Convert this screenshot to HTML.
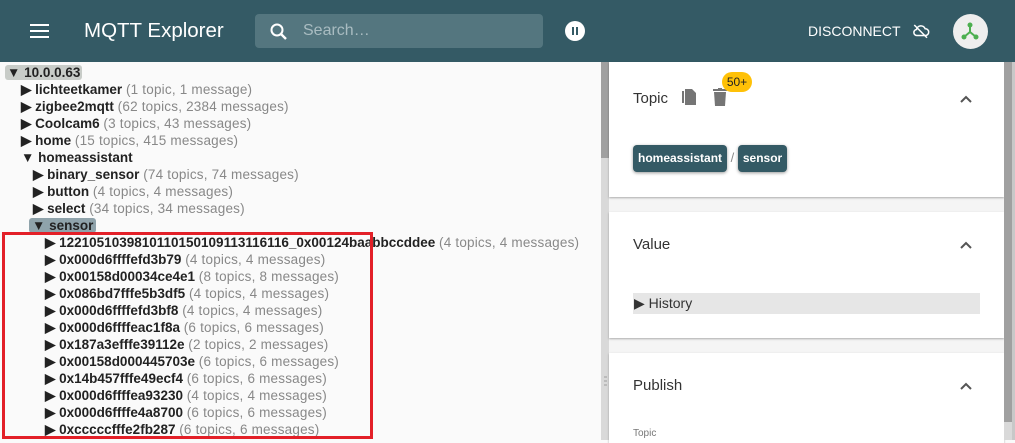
<!DOCTYPE html>
<html><head><meta charset="utf-8"><style>
*{margin:0;padding:0;box-sizing:border-box}
body{width:1015px;height:440px;overflow:hidden;background:#fafafa;font-family:"Liberation Sans",sans-serif;position:relative}
.hdr{position:absolute;left:0;top:0;width:1015px;height:62px;background:#345a65}
.title{position:absolute;left:84px;top:19px;color:#fff;font-size:20.5px}
.search{position:absolute;left:255px;top:14px;width:288px;height:34px;background:#54767f;border-radius:4px}
.search span{position:absolute;left:48px;top:8px;color:#a9bcc1;font-size:16px}
.tree{position:absolute;left:0;top:62px;width:601px;height:378px;background:#fafafa;font-size:13.5px;color:#222}
.r{position:absolute;height:17px;line-height:17px;white-space:nowrap}
.r b{font-weight:bold;color:#222}
.r i{font-style:normal;color:#888;letter-spacing:0.2px}
.chip{background:#c8ccc8;border-radius:3px;padding:0 2px}
.chip2{background:#8fa3ab;border-radius:3px;padding:0 3px}
.card{position:absolute;left:609px;width:395px;background:#fff;box-shadow:0 1px 2px rgba(0,0,0,.3)}
.h{position:absolute;left:24px;font-size:15px;color:#333}
.chev{position:absolute;left:350px;width:14px;height:14px}
.tag{display:inline-block;background:#345a65;color:#fff;font-weight:bold;font-size:12px;padding:0 5px;height:27px;line-height:27px;border-radius:4px;box-shadow:0 1px 3px rgba(0,0,0,.4)}
</style></head><body>
<div class="hdr">
<svg style="position:absolute;left:30px;top:24px" width="19" height="14"><rect y="0" width="19" height="2" fill="#fff"/><rect y="6" width="19" height="2" fill="#fff"/><rect y="12" width="19" height="2" fill="#fff"/></svg>
<div class="title">MQTT Explorer</div>
<div class="search"><svg style="position:absolute;left:14px;top:8px" width="20" height="20"><circle cx="8" cy="8" r="5.5" fill="none" stroke="#fff" stroke-width="2"/><line x1="12" y1="12" x2="17" y2="17" stroke="#fff" stroke-width="2.4"/></svg><span>Search…</span></div>
<svg style="position:absolute;left:565px;top:21px" width="20" height="20"><circle cx="10" cy="10" r="10" fill="#fff"/><rect x="7" y="6" width="2" height="8" fill="#345a65"/><rect x="11" y="6" width="2" height="8" fill="#345a65"/></svg>
<div style="position:absolute;left:808px;top:23px;color:#fff;font-size:14px">DISCONNECT</div>
<svg style="position:absolute;left:912px;top:22px" width="18" height="18" viewBox="0 0 24 24"><path d="M6 10a6 6 0 0 1 11.5-1A4.5 4.5 0 0 1 18 18H7a4 4 0 0 1-1-8z" fill="none" stroke="#fff" stroke-width="2"/><line x1="3" y1="4" x2="20" y2="21" stroke="#fff" stroke-width="2"/></svg>
<div style="position:absolute;left:953px;top:14px;width:35px;height:35px;border-radius:50%;background:#eee"></div>
<svg style="position:absolute;left:960px;top:21px" width="20" height="20"><line x1="10" y1="4" x2="10" y2="11" stroke="#4caf50" stroke-width="2"/><line x1="10" y1="11" x2="4" y2="16" stroke="#4caf50" stroke-width="2"/><line x1="10" y1="11" x2="16" y2="16" stroke="#4caf50" stroke-width="2"/><circle cx="10" cy="4" r="2.5" fill="#4caf50"/><circle cx="4" cy="16" r="2.5" fill="#4caf50"/><circle cx="16" cy="16" r="2.5" fill="#4caf50"/></svg>
</div>
<div class="tree">
<div class="r" style="left:5px;top:2px"><b class="chip">▼ 10.0.0.63</b></div>
<div class="r" style="left:21px;top:19px"><b>▶ lichteetkamer</b> <i>(1 topic, 1 message)</i></div>
<div class="r" style="left:21px;top:36px"><b>▶ zigbee2mqtt</b> <i>(62 topics, 2384 messages)</i></div>
<div class="r" style="left:21px;top:53px"><b>▶ Coolcam6</b> <i>(3 topics, 43 messages)</i></div>
<div class="r" style="left:21px;top:70px"><b>▶ home</b> <i>(15 topics, 415 messages)</i></div>
<div class="r" style="left:21px;top:87px"><b>▼ homeassistant</b></div>
<div class="r" style="left:33px;top:104px"><b>▶ binary_sensor</b> <i>(74 topics, 74 messages)</i></div>
<div class="r" style="left:33px;top:121px"><b>▶ button</b> <i>(4 topics, 4 messages)</i></div>
<div class="r" style="left:33px;top:138px"><b>▶ select</b> <i>(34 topics, 34 messages)</i></div>
<div class="r" style="left:29px;top:155px"><b class="chip2">▼ sensor</b></div>
<div class="r" style="left:45px;top:172px"><b>▶ 1221051039810110150109113116116_0x00124baabbccddee</b> <i>(4 topics, 4 messages)</i></div>
<div class="r" style="left:45px;top:189px"><b>▶ 0x000d6ffffefd3b79</b> <i>(4 topics, 4 messages)</i></div>
<div class="r" style="left:45px;top:206px"><b>▶ 0x00158d00034ce4e1</b> <i>(8 topics, 8 messages)</i></div>
<div class="r" style="left:45px;top:223px"><b>▶ 0x086bd7fffe5b3df5</b> <i>(4 topics, 4 messages)</i></div>
<div class="r" style="left:45px;top:240px"><b>▶ 0x000d6ffffefd3bf8</b> <i>(4 topics, 4 messages)</i></div>
<div class="r" style="left:45px;top:257px"><b>▶ 0x000d6ffffeac1f8a</b> <i>(6 topics, 6 messages)</i></div>
<div class="r" style="left:45px;top:274px"><b>▶ 0x187a3efffe39112e</b> <i>(2 topics, 2 messages)</i></div>
<div class="r" style="left:45px;top:291px"><b>▶ 0x00158d000445703e</b> <i>(6 topics, 6 messages)</i></div>
<div class="r" style="left:45px;top:308px"><b>▶ 0x14b457fffe49ecf4</b> <i>(6 topics, 6 messages)</i></div>
<div class="r" style="left:45px;top:325px"><b>▶ 0x000d6ffffea93230</b> <i>(4 topics, 4 messages)</i></div>
<div class="r" style="left:45px;top:342px"><b>▶ 0x000d6ffffe4a8700</b> <i>(6 topics, 6 messages)</i></div>
<div class="r" style="left:45px;top:359px"><b>▶ 0xcccccfffe2fb287</b> <i>(6 topics, 6 messages)</i></div>
<div style="position:absolute;left:2px;top:170px;width:371px;height:207px;border:3px solid #e32028"></div>
</div>
<div style="position:absolute;left:601px;top:62px;width:8px;height:378px;background:#d9d9d9"></div>
<div style="position:absolute;left:601px;top:62px;width:8px;height:96px;background:#a0a0a0"></div>
<div style="position:absolute;left:609px;top:62px;width:396px;height:378px;background:#f5f5f5"></div>
<div class="card" style="top:62px;height:135px">
<div class="h" style="top:28px">Topic</div>
<svg style="position:absolute;left:72px;top:26px" width="16" height="18" viewBox="0 0 16 18"><path d="M1 3v12h2V3z M4 1h7l4 4v12H4z" fill="#757575"/></svg>
<svg style="position:absolute;left:104px;top:26px" width="14" height="18" viewBox="0 0 14 18"><rect x="0" y="1" width="14" height="2" fill="#757575"/><rect x="5" y="0" width="4" height="2" fill="#757575"/><path d="M1 4h12l-1 14H2z" fill="#757575"/></svg>
<div style="position:absolute;left:113px;top:10px;width:30px;height:20px;border-radius:10px;background:#ffc107;font-size:12px;color:#222;text-align:center;line-height:20px">50+</div>
<svg class="chev" style="top:30px" viewBox="0 0 14 14"><path d="M2 10l5-5 5 5" fill="none" stroke="#555" stroke-width="2"/></svg>
<div style="position:absolute;left:24px;top:83px;font-size:13px;color:#888"><span class="tag">homeassistant</span> / <span class="tag">sensor</span></div>
</div>
<div class="card" style="top:212px;height:126px">
<div class="h" style="top:24px">Value</div>
<svg class="chev" style="top:26px" viewBox="0 0 14 14"><path d="M2 10l5-5 5 5" fill="none" stroke="#555" stroke-width="2"/></svg>
<div style="position:absolute;left:24px;top:81px;width:347px;height:21px;background:#e6e6e6;font-size:14px;line-height:21px;color:#333;padding-left:1px">▶ History</div>
</div>
<div class="card" style="top:353px;height:90px">
<div class="h" style="top:24px">Publish</div>
<svg class="chev" style="top:26px" viewBox="0 0 14 14"><path d="M2 10l5-5 5 5" fill="none" stroke="#555" stroke-width="2"/></svg>
<div style="position:absolute;left:24px;top:75px;font-size:10px;color:#777">Topic</div>
</div>
<div style="position:absolute;left:604px;top:376px;width:3px;height:12px;background:repeating-linear-gradient(#bbb 0 2px,transparent 2px 4px)"></div>
<div style="position:absolute;left:1004px;top:62px;width:8px;height:378px;background:#d9d9d9"></div>
<div style="position:absolute;left:1004px;top:62px;width:8px;height:360px;background:#a0a0a0"></div>
<div style="position:absolute;left:1012px;top:62px;width:3px;height:378px;background:#c8c8c8"></div>
</body></html>
